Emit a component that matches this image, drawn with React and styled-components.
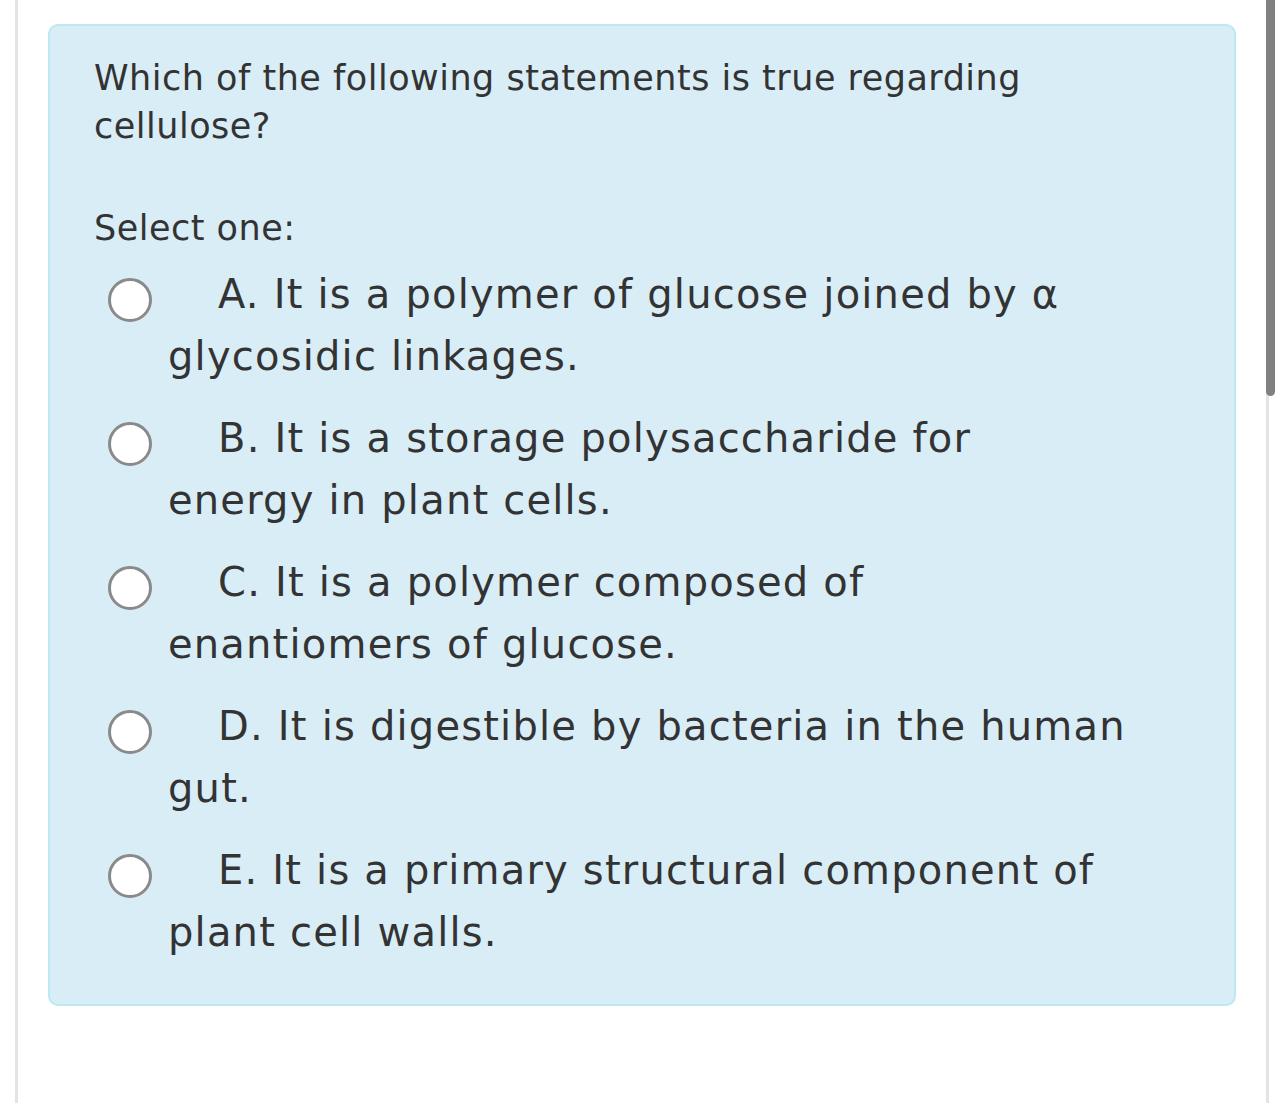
import React from 'react';
import styled, { createGlobalStyle } from 'styled-components';

const GlobalStyle = createGlobalStyle`
  html, body {
    margin: 0;
    padding: 0;
    background: #ffffff;
    overflow: hidden;
  }
  body {
    font-family: "DejaVu Sans", Verdana, sans-serif;
    color: #333333;
  }
`;

const Page = styled.div`
  position: relative;
  height: 1103px;
  width: 1254px;
  margin-left: 15px;
  border-left: 3px solid #e3e3e3;
  border-right: 3px solid #e3e3e3;
  box-sizing: border-box;
  padding: 24px 30px 0 30px;
`;

const ScrollThumb = styled.div`
  position: absolute;
  top: 0;
  right: -9px;
  width: 9px;
  height: 396px;
  background: #808080;
  border-radius: 0 0 5px 5px;
`;

const Card = styled.div`
  background: #d9edf7;
  border: 2px solid #bce8f1;
  border-radius: 10px;
  padding: 28px 44px 44px 44px;
  height: 982px;
  box-sizing: border-box;
`;

const Question = styled.p`
  margin: 0;
  font-size: 35px;
  line-height: 48px;
  letter-spacing: 0.5px;
`;

const Prompt = styled.p`
  margin: 54px 0 11px 0;
  font-size: 35px;
  line-height: 48px;
  letter-spacing: 0.5px;
`;

const Options = styled.div`
  display: flex;
  flex-direction: column;
  gap: 20px;
`;

const Option = styled.label`
  display: block;
  padding-left: 74px;
  padding-right: 60px;
  text-indent: -60px;
  font-size: 40px;
  line-height: 62px;
  letter-spacing: 1.2px;
`;

const Radio = styled.span`
  display: inline-block;
  width: 44px;
  height: 44px;
  box-sizing: border-box;
  border: 3px solid #8a8a8a;
  border-radius: 50%;
  background: #ffffff;
  vertical-align: middle;
  margin-right: 66px;
  text-indent: 0;
  position: relative;
  top: 3px;
`;

const options = [
  'A. It is a polymer of glucose joined by α glycosidic linkages.',
  'B. It is a storage polysaccharide for energy in plant cells.',
  'C. It is a polymer composed of enantiomers of glucose.',
  'D. It is digestible by bacteria in the human gut.',
  'E. It is a primary structural component of plant cell walls.',
];

export default function App() {
  return (
    <>
      <GlobalStyle />
      <Page>
        <ScrollThumb />
        <Card>
          <Question>Which of the following statements is true regarding cellulose?</Question>
          <Prompt>Select one:</Prompt>
          <Options>
            {options.map((text) => (
              <Option key={text}>
                <Radio />
                {text}
              </Option>
            ))}
          </Options>
        </Card>
      </Page>
    </>
  );
}
